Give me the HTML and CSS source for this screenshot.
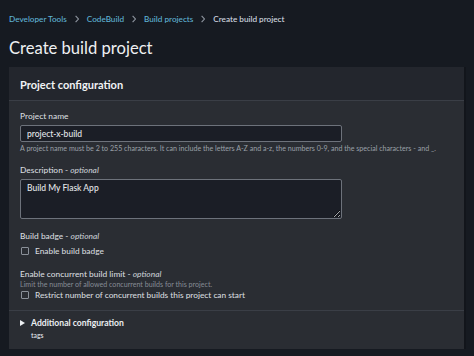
FILE: index.html
```html
<!DOCTYPE html>
<html lang="en">
<head>
  <meta charset="UTF-8">
  <title>Create build project</title>
  <link rel="stylesheet" href="styles.css">
</head>
<body>
  <nav class="crumbs">
    <a href="#">Developer Tools</a>
    <svg class="sep" width="4" height="8" viewBox="0 0 4 8"><path d="M0.6 0.8 L3.4 4 L0.6 7.2" fill="none" stroke="#8d949e" stroke-width="1.1"/></svg>
    <a href="#">CodeBuild</a>
    <svg class="sep" width="4" height="8" viewBox="0 0 4 8"><path d="M0.6 0.8 L3.4 4 L0.6 7.2" fill="none" stroke="#8d949e" stroke-width="1.1"/></svg>
    <a href="#">Build projects</a>
    <svg class="sep" width="4" height="8" viewBox="0 0 4 8"><path d="M0.6 0.8 L3.4 4 L0.6 7.2" fill="none" stroke="#8d949e" stroke-width="1.1"/></svg>
    <span class="current">Create build project</span>
  </nav>
  <h1 class="page-title">Create build project</h1>

  <section class="panel">
    <div class="panel-head">Project configuration</div>
    <div class="panel-body">
      <div class="field">
        <label class="label">Project name</label>
        <input class="input" type="text" value="project-x-build">
        <div class="hint">A project name must be 2 to 255 characters. It can include the letters A-Z and a-z, the numbers 0-9, and the special characters - and _.</div>
      </div>
      <div class="field">
        <label class="label">Description - <i>optional</i></label>
        <textarea class="input textarea">Build My Flask App</textarea>
      </div>
      <div class="field">
        <label class="label">Build badge - <i>optional</i></label>
        <label class="check"><span class="box"></span>Enable build badge</label>
      </div>
      <div class="field">
        <label class="label">Enable concurrent build limit - <i>optional</i></label>
        <div class="hint dim">Limit the number of allowed concurrent builds for this project.</div>
        <label class="check"><span class="box"></span>Restrict number of concurrent builds this project can start</label>
      </div>
    </div>
    <div class="panel-foot">
      <div class="expand"><span class="tri"></span>Additional configuration</div>
      <div class="tags">tags</div>
    </div>
  </section>
</body>
</html>
```

FILE: styles.css
```css
html, body {
  margin: 0;
  height: 100%;
}
body {
  background: #161a21;
  font-family: 'Lato', sans-serif;
  color: #d1d5db;
  padding: 0 10px 0 9px;
  overflow: hidden;
}
.crumbs {
  display: flex;
  align-items: center;
  gap: 8px;
  height: 38px;
  font-size: 8.2px;
  font-weight: 500;
}
.crumbs a {
  color: #5fb2d4;
  text-decoration: none;
}
.crumbs .current {
  color: #d5dbe1;
}
.page-title {
  margin: 0;
  font-size: 16.6px;
  font-weight: 400;
  color: #eef0f2;
  height: 29px;
  line-height: 20px;
}
.panel {
  background: #2a2d33;
  box-shadow: 2px 0 0 #12151b;
}
.panel-head {
  box-sizing: border-box;
  background: #23262d;
  border-bottom: 1px solid #3a3e46;
  height: 34px;
  display: flex;
  align-items: center;
  padding: 2px 0 0 11px;
  font-size: 11px;
  font-weight: 700;
  color: #f1f3f5;
}
.panel-body {
  padding: 9px 11px 9px;
  display: flex;
  flex-direction: column;
  gap: 11px;
}
.label {
  display: block;
  font-size: 8.4px;
  font-weight: 500;
  color: #d5d9de;
  line-height: 12px;
  margin-bottom: 3px;
}
.label i {
  color: #c4c9cf;
}
.input {
  box-sizing: border-box;
  display: block;
  width: 322px;
  height: 17px;
  margin: 0;
  background: #1b1e26;
  border: 1px solid #6d727b;
  border-radius: 2px;
  color: #e4e7ea;
  font-family: inherit;
  font-size: 8.5px;
  font-weight: 500;
  padding: 0 6px;
  outline: none;
}
.textarea {
  height: 40px;
  padding: 3px 6px;
  resize: vertical;
}
.hint {
  font-size: 7.1px;
  line-height: 9px;
  color: #9aa0a8;
  margin-top: 2px;
  white-space: nowrap;
}
.hint.dim {
  margin-top: -3px;
  color: #868c95;
}
.check {
  display: flex;
  align-items: center;
  gap: 6px;
  height: 12px;
  font-size: 8.3px;
  font-weight: 500;
  color: #d5d9de;
  margin-top: 0;
}
.box {
  box-sizing: border-box;
  width: 8px;
  height: 8px;
  border: 1px solid #8a9099;
  border-radius: 1px;
  margin-left: 1px;
}
.panel-foot {
  border-top: 1px solid #3a3e46;
  padding: 6px 11px 9px;
}
.expand {
  display: flex;
  align-items: center;
  gap: 6px;
  height: 12px;
  font-size: 8.6px;
  font-weight: 700;
  color: #eceff2;
}
.tri {
  width: 0;
  height: 0;
  border-top: 3.5px solid transparent;
  border-bottom: 3.5px solid transparent;
  border-left: 5px solid #eceff2;
}
.tags {
  font-size: 6.8px;
  line-height: 10px;
  font-weight: 700;
  color: #c9ced4;
  padding-left: 11px;
  margin-top: 1px;
}
```
